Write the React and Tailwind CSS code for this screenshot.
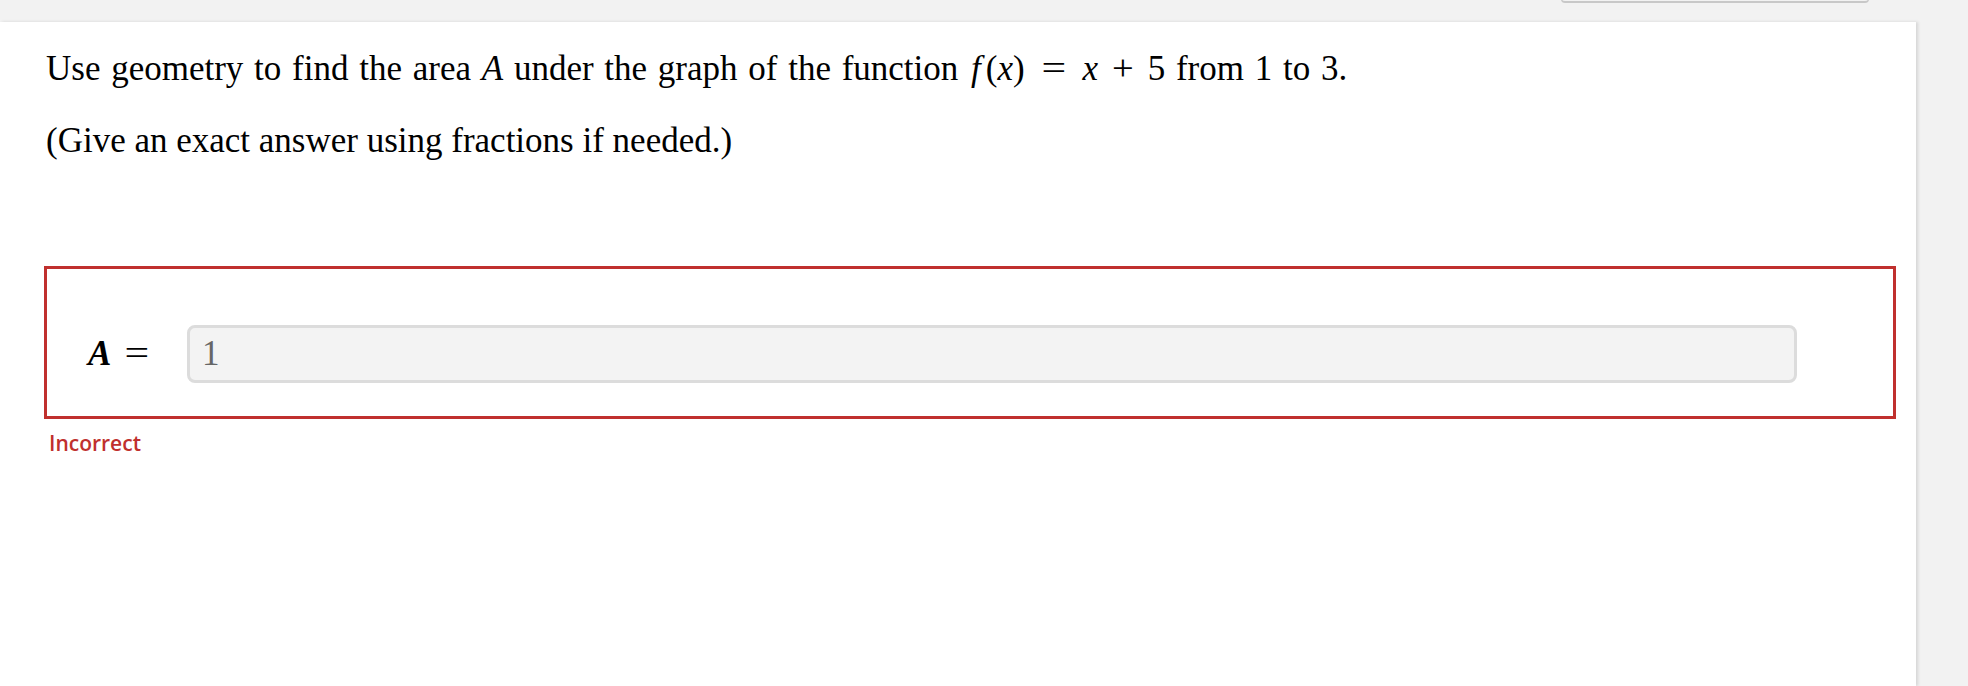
import React from 'react'

const serif = { fontFamily: '"Liberation Serif", "Times New Roman", serif' }

export default function App() {
  return (
    <div className="min-h-[686px] bg-[#f2f2f2] overflow-hidden">
      {/* top strip with the bottom edge of a toolbar button */}
      <div className="h-[22px] flex justify-end pr-[99px]">
        <div className="w-[308px] h-[4px] -mt-[1px] border-x border-b-2 border-[#c8c8c8] rounded-b-[6px] bg-[#f2f2f2]" />
      </div>

      <div className="w-[1916px] min-h-[664px] bg-white shadow-[2px_0_3px_rgba(0,0,0,0.12)] pt-[27px] pl-[46px] pr-[20px]" style={serif}>
        <p className="text-[35px] leading-[40px] text-black whitespace-nowrap [word-spacing:2px]">
          Use geometry to find the area <i>A</i> under the graph of the function{' '}
          <span className="ml-[2px] [word-spacing:0]">
            <i className="mr-[5px]">f</i>(<i>x</i>)
            <span className="inline-block mx-[19px] scale-x-125">=</span>
            <i>x</i>
            <span className="inline-block mx-[15px] scale-x-110">+</span>5
          </span>{' '}
          from 1 to 3.
        </p>
        <p className="mt-[32px] text-[35px] leading-[40px] text-black">
          (Give an exact answer using fractions if needed.)
        </p>

        <div className="mt-[105px] -ml-[2px] w-[1852px] border-[3px] border-[#c0302e] pt-[56px] pb-[33px] pl-[41px] flex items-center">
          <div className="w-[99px] text-[35px] leading-[40px] text-black whitespace-nowrap">
            <i className="font-bold">A</i><span className="inline-block ml-[16px] scale-x-125">=</span>
          </div>
          <div className="w-[1610px] h-[58px] rounded-[8px] border-[3px] border-[#dcdcdc] bg-[#f3f3f3] flex items-center pl-[12px] text-[35px] text-[#666]">
            1
          </div>
        </div>

        <div
          className="mt-[9px] ml-[3px] text-[21px] font-semibold text-[#c0302e]"
          style={{ fontFamily: '"Open Sans", "Noto Sans", sans-serif' }}
        >
          Incorrect
        </div>
      </div>
    </div>
  )
}
